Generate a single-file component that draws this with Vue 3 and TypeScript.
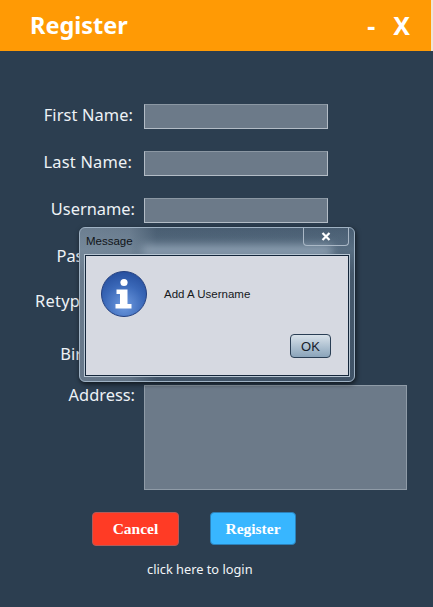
<script setup lang="ts">
interface Row { label: string; tune: string }
const rows: Row[] = [
  { label: 'First Name:', tune: 'first' },
  { label: 'Last Name:', tune: 'last' },
  { label: 'Username:', tune: 'plain' },
  { label: 'Password:', tune: 'plain' },
  { label: 'Retype Pass:', tune: 'retype' },
  { label: 'Birthday:', tune: 'birth' },
]
</script>

<template>
  <div class="page">
    <header class="bar">
      <h1 class="title">Register</h1>
      <div class="win">
        <span class="min">-</span>
        <span class="close">X</span>
      </div>
    </header>
    <main class="form">
      <div v-for="r in rows" :key="r.label" class="row">
        <label class="label" :class="r.tune">{{ r.label }}</label>
        <div class="field"></div>
      </div>
      <div class="row address">
        <label class="label addr">Address:</label>
        <div class="area"></div>
      </div>
      <div class="actions">
        <button class="btn cancel">Cancel</button>
        <button class="btn register">Register</button>
      </div>
      <p class="login">click here to login</p>
    </main>

    <div class="dialog">
      <div class="dtitle">
        <span class="dname">Message</span>
        <span class="dclose">
          <svg width="10" height="9" viewBox="0 0 10 9"><path d="M1.5 1l7 7M8.5 1l-7 7" stroke="#fff" stroke-width="2.2" fill="none"/></svg>
        </span>
      </div>
      <div class="dbody">
        <div class="dmain">
          <svg class="info" width="46" height="46" viewBox="0 0 46 46">
            <defs>
              <radialGradient id="g" cx="50%" cy="75%" r="75%">
                <stop offset="0" stop-color="#6f9be0"/>
                <stop offset="0.6" stop-color="#3a68b8"/>
                <stop offset="1" stop-color="#27509f"/>
              </radialGradient>
            </defs>
            <circle cx="23" cy="23" r="22.5" fill="url(#g)" stroke="#24407f"/>
            <circle cx="23" cy="11.5" r="3.6" fill="#fff"/>
            <path d="M15.5 18.5h11v14.5h4v4.5h-16v-4.5h4.5v-10h-3.5z" fill="#fff"/>
          </svg>
          <span class="msg">Add A Username</span>
        </div>
        <button class="ok">OK</button>
      </div>
    </div>
  </div>
</template>

<style scoped>
.page {
  position: relative;
  width: 433px;
  height: 607px;
  background: #2c3e50;
  overflow: hidden;
  font-family: "Noto Sans", sans-serif;
}
.bar {
  height: 51px;
  background: #ff9a05;
  border-right: 2px solid #efe6d6;
  display: flex;
  align-items: center;
  justify-content: space-between;
  padding: 0 21px 2px 30px;
  box-sizing: border-box;
  color: #fff;
}
.title {
  margin: 0;
  font-size: 23.5px;
  font-weight: 700;
}
.win {
  display: flex;
  align-items: center;
  gap: 18px;
  font-weight: 700;
  font-size: 25px;
}
.form {
  padding-top: 53px;
}
.row {
  display: grid;
  grid-template-columns: 136px auto;
  column-gap: 8px;
  height: 47px;
  align-items: start;
}
.label {
  color: #eef2f6;
  font-size: 16.4px;
  line-height: 22px;
  margin-right: 1px;
  text-align: right;
  white-space: nowrap;
  justify-self: end;
}
.first { margin-right: 3px; letter-spacing: 0.1px; }
.last { margin-right: 4px; letter-spacing: 0.2px; }
.retype { margin-top: -2px; letter-spacing: 0.3px; }
.birth { margin-top: 4px; margin-right: 6px; }
.addr { margin-top: -1px; }
.field {
  width: 184px;
  height: 25px;
  box-sizing: border-box;
  background: #6c7a89;
  border: 1px solid #b3bcc6;
  border-top-color: #8b97a3;
}
.address {
  height: 105px;
  margin-top: -1px;
}
.area {
  width: 263px;
  height: 105px;
  box-sizing: border-box;
  background: #6c7a89;
  border: 1px solid #8f9ba7;
}
.actions {
  display: flex;
  gap: 31px;
  padding-left: 92px;
  margin-top: 22px;
  align-items: flex-start;
}
.btn {
  height: 34px;
  border-radius: 4px;
  color: #fff;
  font-family: "Liberation Serif", serif;
  font-weight: 700;
  font-size: 15.5px;
  padding: 0;
  box-sizing: border-box;
}
.cancel {
  width: 87px;
  background: #ff3b25;
  border: 1px solid #b35a58;
}
.register {
  width: 86px;
  height: 33px;
  background: #38b6ff;
  border: 1px solid #2d80b8;
}
.login {
  margin: 13px 0 0;
  padding-left: 147px;
  font-size: 12.8px;
  line-height: 20px;
  color: #f2f5f8;
}
.dialog {
  position: absolute;
  left: 79px;
  top: 227px;
  width: 276px;
  height: 155px;
  box-sizing: border-box;
  padding: 0 5px 5px;
  border-radius: 6px;
  border: 1px solid #9fb2c4;
  overflow: hidden;
  background:
    linear-gradient(90deg, rgba(150, 165, 180, 0.45) 0, rgba(150, 165, 180, 0.4) 18%, rgba(70, 88, 106, 0.2) 28%, rgba(70, 88, 106, 0.1) 100%),
    linear-gradient(180deg, #4a5f74 0%, #5a7084 14%, #46596c 30%, #3f5266 100%);
  box-shadow: 1px 2px 5px rgba(0, 0, 0, 0.65);
  display: flex;
  flex-direction: column;
}
.dialog::before {
  content: "";
  position: absolute;
  left: 62px;
  top: 17px;
  width: 190px;
  height: 12px;
  background: #8a9cae;
  filter: blur(4px);
}
.dtitle {
  position: relative;
  height: 27px;
  display: flex;
  justify-content: space-between;
  align-items: flex-start;
}
.dname {
  font-family: "Liberation Sans", sans-serif;
  font-size: 11.5px;
  line-height: 14px;
  color: #101418;
  margin-top: 6px;
  margin-left: 1px;
}
.dclose {
  width: 46px;
  height: 18px;
  box-sizing: border-box;
  border: 1px solid #aab8c6;
  border-top: none;
  border-radius: 0 0 4px 4px;
  display: flex;
  align-items: center;
  justify-content: center;
}
.dbody {
  flex: 1;
  box-sizing: border-box;
  background: #d6d9e1;
  border: 1px solid #14263a;
  outline: 1px solid #b8c6d3;
  display: flex;
  flex-direction: column;
  position: relative;
}
.dmain {
  display: flex;
  align-items: center;
  gap: 17px;
  padding: 15px 0 0 15px;
}
.msg {
  font-family: "Liberation Sans", sans-serif;
  font-size: 11.5px;
  color: #15181c;
}
.ok {
  position: absolute;
  right: 17px;
  bottom: 17px;
  width: 41px;
  height: 24px;
  padding: 0;
  border-radius: 4px;
  border: 1px solid #2b3f55;
  background: linear-gradient(180deg, #d9e2ea 0%, #a8bccd 60%, #8ba4ba 100%);
  font-family: "Liberation Sans", sans-serif;
  font-size: 13px;
  color: #16202b;
}
</style>
